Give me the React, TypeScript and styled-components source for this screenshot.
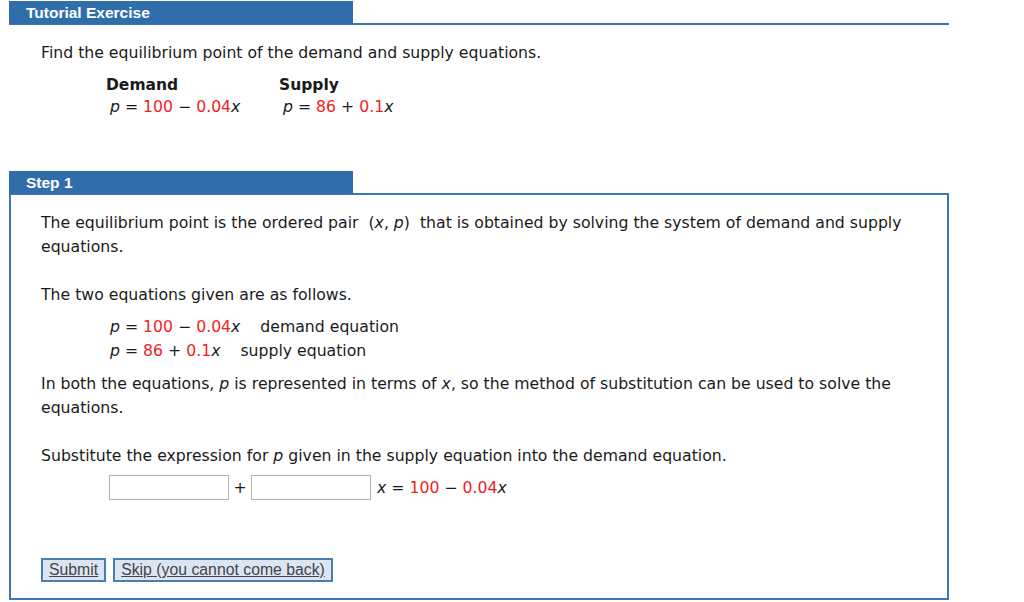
import React from 'react';
import styled, { createGlobalStyle } from 'styled-components';

const Global = createGlobalStyle`
  html, body { margin: 0; padding: 0; background: #fff; }
  body { font-family: "DejaVu Sans", Verdana, sans-serif; font-size: 15.7px; color: #1a1a1a; }
`;

const Page = styled.div`
  width: 940px;
  padding: 1px 0 0 9px;
`;

const TabRow = styled.div`
  display: flex;
  align-items: flex-end;
  border-bottom: 2px solid #3a78b5;
`;

const Tab = styled.div`
  width: 344px;
  height: 23px;
  background: #2f6eab;
  color: #fff;
  font-family: "Liberation Sans", Arial, sans-serif;
  font-weight: bold;
  font-size: 15.5px;
  line-height: 23px;
  padding-left: 17px;
  box-sizing: border-box;
  margin-bottom: -1px;
`;

const Intro = styled.div`
  padding: 16px 0 0 32px;
  height: 146px;
  box-sizing: border-box;
`;

const Text = styled.p<{ $gap?: number }>`
  margin: 0 0 ${(p) => p.$gap ?? 0}px 0;
  line-height: 24px;
`;

const EqGrid = styled.div`
  display: grid;
  grid-template-columns: 173px auto;
  padding: 9px 0 0 65px;
  line-height: 22px;
`;

const Head = styled.div`
  font-weight: bold;
  font-size: 15.5px;
`;

const Eq = styled.span`
  padding-left: 4px;
  white-space: pre;
`;

const V = styled.i`
  font-style: italic;
`;

const Red = styled.span`
  color: #f21d1d;
`;

const StepBox = styled.div`
  border: 2px solid #3a78b5;
  border-top: none;
  height: 405px;
  box-sizing: border-box;
  padding: 16px 38px 0 30px;
`;

const EqList = styled.div`
  padding: 8px 0 9px 69px;
  line-height: 24px;
`;

const EqLine = styled.div`
  white-space: pre;
`;

const AnswerRow = styled.div`
  display: flex;
  align-items: center;
  padding: 7px 0 0 68px;
`;

const Box = styled.input`
  width: 120px;
  height: 25px;
  box-sizing: border-box;
  border: 1px solid #b4b4b4;
  margin: 0;
  padding: 0;
`;

const Plus = styled.span`
  width: 22px;
  text-align: center;
`;

const Tail = styled.span`
  padding-left: 6px;
  white-space: pre;
`;

const Buttons = styled.div`
  display: flex;
  gap: 7px;
  padding: 58px 0 0 0;
`;

const Btn = styled.button`
  height: 24px;
  background: #dce6f2;
  border: 2px solid #4a7db3;
  color: #444;
  font-family: "Liberation Sans", Arial, sans-serif;
  font-size: 15.8px;
  text-decoration: underline;
  padding: 0 6px;
  margin: 0;
  line-height: 20px;
`;

const P = () => <V>p</V>;
const X = () => <V>x</V>;

export default function App() {
  return (
    <>
      <Global />
      <Page>
        <TabRow>
          <Tab>Tutorial Exercise</Tab>
        </TabRow>
        <Intro>
          <Text>Find the equilibrium point of the demand and supply equations.</Text>
          <EqGrid>
            <Head>Demand</Head>
            <Head>Supply</Head>
            <Eq>
              <P /> = <Red>100</Red> − <Red>0.04</Red>
              <X />
            </Eq>
            <Eq>
              <P /> = <Red>86</Red> + <Red>0.1</Red>
              <X />
            </Eq>
          </EqGrid>
        </Intro>
        <TabRow>
          <Tab>Step 1</Tab>
        </TabRow>
        <StepBox>
          <Text $gap={24}>
            The equilibrium point is the ordered pair &nbsp;(<X />, <P />)&nbsp; that is obtained by solving the system of demand and supply equations.
          </Text>
          <Text>The two equations given are as follows.</Text>
          <EqList>
            <EqLine>
              <P /> = <Red>100</Red> − <Red>0.04</Red>
              <X />
              {'    '}demand equation
            </EqLine>
            <EqLine>
              <P /> = <Red>86</Red> + <Red>0.1</Red>
              <X />
              {'    '}supply equation
            </EqLine>
          </EqList>
          <Text $gap={24}>
            In both the equations, <P /> is represented in terms of <X />, so the method of substitution can be used to solve the equations.
          </Text>
          <Text>Substitute the expression for <P /> given in the supply equation into the demand equation.</Text>
          <AnswerRow>
            <Box />
            <Plus>+</Plus>
            <Box />
            <Tail>
              <X /> = <Red>100</Red> − <Red>0.04</Red>
              <X />
            </Tail>
          </AnswerRow>
          <Buttons>
            <Btn>Submit</Btn>
            <Btn>Skip (you cannot come back)</Btn>
          </Buttons>
        </StepBox>
      </Page>
    </>
  );
}
